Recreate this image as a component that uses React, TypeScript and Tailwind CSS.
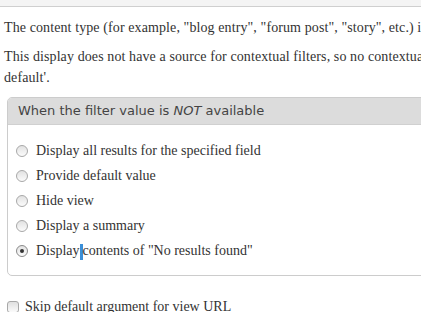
import React from 'react';

const serif = { fontFamily: '"Liberation Serif", "DejaVu Serif", serif' };

const options = [
  'Display all results for the specified field',
  'Provide default value',
  'Hide view',
  'Display a summary',
];

export default function App() {
  return (
    <div className="w-[421px] h-[312px] overflow-hidden bg-white text-[#333]" style={serif}>
      <div className="h-[7px] bg-[#f4f4f4] border-b border-[#cfcfcf]" />
      <div className="pl-[4px] whitespace-nowrap text-[14px]">
        <p className="mt-[11px] leading-[20px] tracking-[0.1px]">
          The content type (for example, "blog entry", "forum post", "story", etc.) is not available when the view is empty.
        </p>
        <p className="mt-[8px] leading-[21px] tracking-[0.1px]">
          This display does not have a source for contextual filters, so no contextual filter value will be available unless you select 'Provide
          <br />
          default'.
        </p>
      </div>
      <div className="ml-[7px] mt-[9px] w-[600px] h-[179px] border border-[#cccccc] rounded-tl-[5px] rounded-bl-[5px]">
        <div
          className="h-[27px] bg-[#dcdcdc] border-b border-[#d0d0d0] pl-[10px] flex items-center text-[13px] text-[#444] rounded-tl-[4px]"
          style={{ fontFamily: '"DejaVu Sans", Verdana, sans-serif' }}
        >
          When the filter value is&nbsp;<i>NOT</i>&nbsp;available
        </div>
        <div className="pt-[16px] pl-[8px] flex flex-col gap-[6px] text-[14px]">
          {options.map((o) => (
            <label key={o} className="flex items-center gap-[8px] h-[19px]">
              <span className="w-[12px] h-[12px] rounded-full border border-[#a8a8a8] bg-gradient-to-b from-[#e2e2e2] to-[#fbfbfb]" />
              {o}
            </label>
          ))}
          <label className="flex items-center gap-[8px] h-[19px]">
            <span className="w-[12px] h-[12px] rounded-full border border-[#8a8a8a] bg-gradient-to-b from-[#e2e2e2] to-[#fbfbfb] flex items-center justify-center">
              <span className="w-[4px] h-[4px] rounded-full bg-[#333]" />
            </span>
            <span>
              Display<span className="inline-block w-[3px] h-[16px] bg-[#3b8fd8] align-middle" />contents of "No results found"
            </span>
          </label>
        </div>
      </div>
      <label className="ml-[7px] mt-[20px] flex items-center gap-[6px] text-[14px]">
        <span className="w-[12px] h-[12px] rounded-[3px] border border-[#a8a8a8] bg-gradient-to-b from-[#e0e0e0] to-[#fbfbfb]" />
        Skip default argument for view URL
      </label>
    </div>
  );
}
